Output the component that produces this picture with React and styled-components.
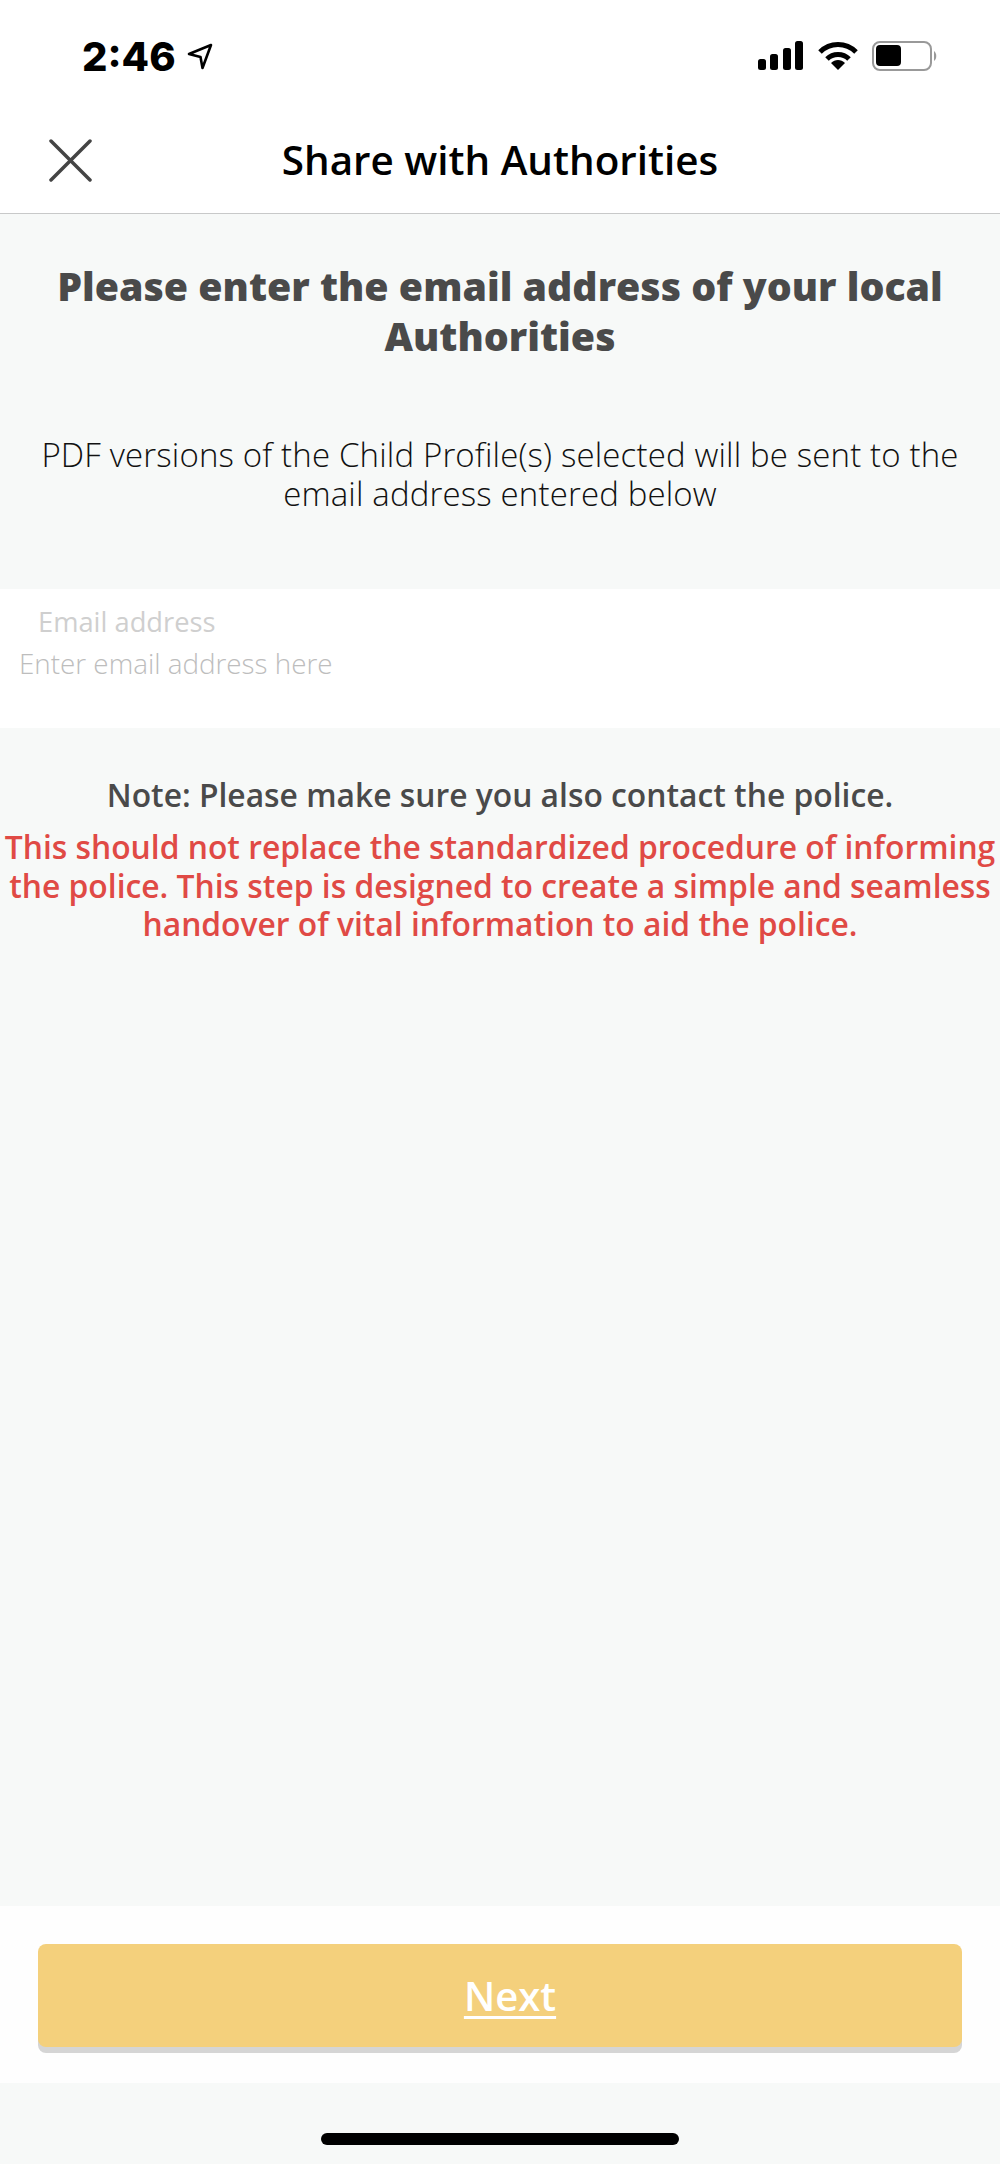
import React from "react";
import styled, { createGlobalStyle } from "styled-components";

const Global = createGlobalStyle`
  html, body { margin: 0; padding: 0; background: #f7f9f8; }
  * { box-sizing: border-box; }
  body { font-family: "Open Sans", "Noto Sans", sans-serif; }
`;

const Screen = styled.div`
  width: 1000px;
  height: 2164px;
  display: flex;
  flex-direction: column;
  background: #f7f9f8;
  overflow: hidden;
`;

const StatusBar = styled.div`
  height: 106px;
  flex: none;
  background: #fff;
  display: flex;
  align-items: flex-start;
  justify-content: space-between;
  padding: 32px 62px 0 82px;
`;

const Clock = styled.div`
  display: flex;
  align-items: center;
  gap: 11px;
  height: 48px;
  font-family: Inter, sans-serif;
  font-weight: 800;
  font-size: 40px;
  color: #000;
`;

const StatusIcons = styled.div`
  display: flex;
  align-items: center;
  height: 48px;
  gap: 14px;
`;

const Header = styled.header`
  height: 108px;
  flex: none;
  background: #fff;
  border-bottom: 1px solid #c8c9c9;
  position: relative;
  display: flex;
  align-items: center;
  justify-content: center;
`;

const CloseButton = styled.div`
  position: absolute;
  left: 49px;
  top: 33px;
  width: 43px;
  height: 43px;
  display: flex;
`;

const Title = styled.div`
  font-size: 40.4px;
  font-weight: 600;
  color: #000;
`;

const Intro = styled.section`
  flex: none;
  height: 375px;
  padding-top: 47px;
  display: flex;
  flex-direction: column;
  align-items: center;
  text-align: center;
`;

const Heading = styled.h1`
  margin: 0;
  font-size: 39.3px;
  line-height: 50px;
  font-weight: 800;
  color: #4a4a4a;
  width: 920px;
`;

const Description = styled.p`
  margin: 74px 0 0;
  font-size: 33px;
  line-height: 39px;
  font-weight: 300;
  letter-spacing: 0.15px;
  color: #111;
  width: 960px;
`;

const Field = styled.div`
  flex: none;
  height: 139px;
  background: #fff;
  padding-top: 14px;
`;

const FieldLabel = styled.div`
  padding-left: 38px;
  font-size: 27.3px;
  line-height: 38px;
  color: #cfcfcf;
`;

const FieldInput = styled.input`
  display: block;
  margin: 3px 0 0 19px;
  padding: 0;
  width: 900px;
  border: 0;
  outline: 0;
  background: transparent;
  font-family: inherit;
  font-size: 27.8px;
  font-weight: 300;
  line-height: 38px;
  &::placeholder { color: #bdbdbd; opacity: 1; }
`;

const Notes = styled.section`
  flex: 1;
  padding-top: 47px;
  text-align: center;
`;

const Note = styled.p`
  margin: 0;
  font-size: 31.8px;
  line-height: 40px;
  font-weight: 600;
  color: #4a4a4a;
`;

const Warning = styled.p`
  margin: 13px 0 0;
  font-size: 31.8px;
  line-height: 38.5px;
  font-weight: 600;
  color: #e04a45;
  white-space: nowrap;
`;

const Footer = styled.div`
  flex: none;
  height: 177px;
  background: #fefefe;
  padding: 38px 38px 0;
`;

const NextButton = styled.button`
  display: flex;
  align-items: center;
  justify-content: center;
  width: 924px;
  height: 103px;
  padding: 0 0 0 20px;
  border: 0;
  border-radius: 8px;
  background: #f4d07c;
  box-shadow: 0 6px 0 #d5d5d5;
  color: #fff;
  font-family: inherit;
  font-size: 40px;
  font-weight: 600;
  text-decoration: underline;
  text-decoration-thickness: 3px;
  text-underline-offset: 5px;
`;

const HomeArea = styled.div`
  flex: none;
  height: 81px;
  padding-top: 50px;
  display: flex;
  justify-content: center;
`;

const HomeBar = styled.div`
  width: 358px;
  height: 12px;
  border-radius: 6px;
  background: #000;
`;

export default function App() {
  return (
    <Screen>
      <Global />
      <StatusBar>
        <Clock>
          2:46
          <svg width="26" height="27" viewBox="0 0 26 27" fill="none">
            <path d="M24 2 L2 11 L13.5 14 L15.5 25 Z" stroke="#000" strokeWidth="2.6" strokeLinejoin="round" />
          </svg>
        </Clock>
        <StatusIcons>
          <svg width="46" height="30" viewBox="0 0 46 30" fill="#000">
            <rect x="0" y="18" width="8" height="11" rx="2.5" />
            <rect x="12" y="13" width="8" height="16" rx="2.5" />
            <rect x="25" y="7" width="8" height="22" rx="2.5" />
            <rect x="37" y="0" width="8" height="29" rx="2.5" />
          </svg>
          <svg width="40" height="30" viewBox="0 0 40 30" fill="none">
            <path d="M2 11 C12 1 28 1 38 11" stroke="#000" strokeWidth="5" />
            <path d="M9 18 C15 12 25 12 31 18" stroke="#000" strokeWidth="5" />
            <path d="M13 22 C17 18 23 18 27 22 L20 29 Z" fill="#000" />
          </svg>
          <svg width="66" height="30" viewBox="0 0 66 30" fill="none">
            <rect x="1" y="1" width="58" height="28" rx="7" stroke="#999" strokeWidth="2" fill="#fff" />
            <rect x="4" y="4" width="25" height="21" rx="4" fill="#000" />
            <path d="M62 10 C65 12 65 18 62 20 Z" fill="#999" />
          </svg>
        </StatusIcons>
      </StatusBar>
      <Header>
        <CloseButton>
          <svg width="43" height="43" viewBox="0 0 43 43" fill="none">
            <path d="M2 2 L41 41 M41 2 L2 41" stroke="#444" strokeWidth="3.5" strokeLinecap="round" />
          </svg>
        </CloseButton>
        <Title>Share with Authorities</Title>
      </Header>
      <Intro>
        <Heading>Please enter the email address of your local Authorities</Heading>
        <Description>PDF versions of the Child Profile(s) selected will be sent to the email address entered below</Description>
      </Intro>
      <Field>
        <FieldLabel>Email address</FieldLabel>
        <FieldInput placeholder="Enter email address here" readOnly />
      </Field>
      <Notes>
        <Note>Note: Please make sure you also contact the police.</Note>
        <Warning>
          This should not replace the standardized procedure of informing
          <br />
          the police. This step is designed to create a simple and seamless
          <br />
          handover of vital information to aid the police.
        </Warning>
      </Notes>
      <Footer>
        <NextButton>Next</NextButton>
      </Footer>
      <HomeArea>
        <HomeBar />
      </HomeArea>
    </Screen>
  );
}
